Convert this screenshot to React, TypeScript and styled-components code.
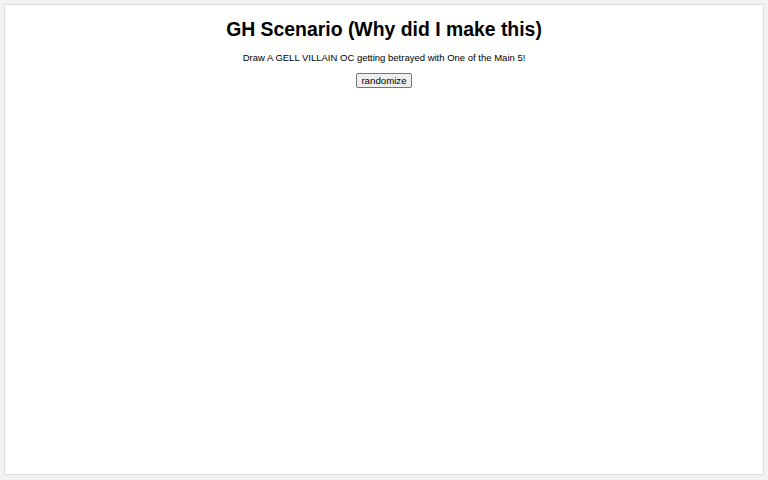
import React, {useState} from "react";
import styled, {createGlobalStyle} from "styled-components";

const scenarios = [
    "Draw A GELL VILLAIN OC getting betrayed with One of the Main 5!",
];

export default function App() {
    const [scenario, setScenario] = useState<string>(scenarios[0]);

    const randomize = () => {
        setScenario(scenarios[Math.floor(Math.random() * scenarios.length)]);
    }

    return <>
        <GlobalStyle/>
        <StyledCard>
            <StyledH1>GH Scenario (Why did I make this)</StyledH1>
            <StyledText>{scenario}</StyledText>
            <StyledButton onClick={randomize}>randomize</StyledButton>
        </StyledCard>
    </>
}

const GlobalStyle = createGlobalStyle`
  html, body {
    margin: 0;
    padding: 0;
    background: #f2f2f2;
    font-family: 'Liberation Sans', Arial, sans-serif;
  }
`

const StyledCard = styled.main`
  margin: 4px;
  width: 760px;
  height: 471px;
  box-sizing: border-box;
  background: #ffffff;
  border: 1px solid #dcdcdc;
  display: flex;
  flex-direction: column;
  align-items: center;
`

const StyledH1 = styled.h1`
  margin: 13px 0 0 0;
  font-size: 19.4px;
  font-weight: 700;
  line-height: 22px;
  color: #000000;
`

const StyledText = styled.p`
  margin: 12px 0 0 0;
  font-size: 9.5px;
  line-height: 11px;
  color: #000000;
`

const StyledButton = styled.button`
  margin-top: 10px;
  padding: 1px 4px;
  font-family: 'Liberation Sans', Arial, sans-serif;
  font-size: 9.7px;
  color: #000000;
  background: #efefef;
  border: 1px solid #767676;
  border-radius: 2px;
`
